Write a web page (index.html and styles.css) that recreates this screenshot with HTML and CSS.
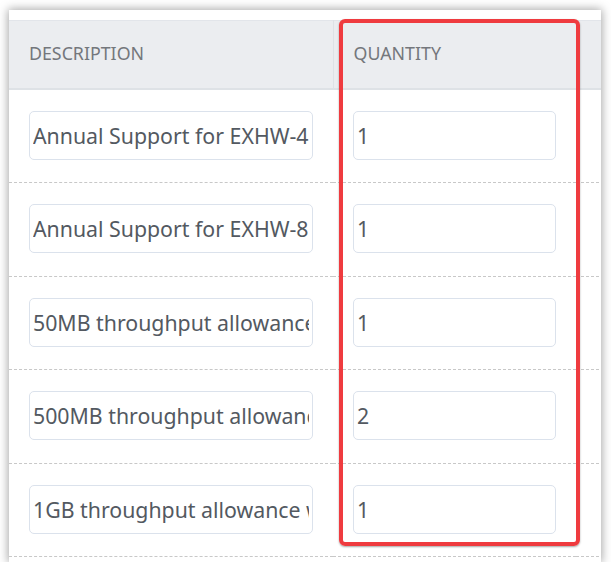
FILE: index.html
```html
<!DOCTYPE html>
<html lang="en">

<head>
  <meta charset="UTF-8" />
  <meta name="viewport" content="width=device-width, initial-scale=1.0" />
  <title>Items</title>
  <link rel="stylesheet" href="styles.css">
</head>

<body>
  <section class="panel">
    <table class="items">
      <colgroup>
        <col class="col-desc" />
        <col class="col-qty" />
        <col class="col-rest" />
      </colgroup>
      <thead>
        <tr>
          <th class="divider">DESCRIPTION</th>
          <th>QUANTITY</th>
          <th></th>
        </tr>
      </thead>
      <tbody>
        <tr>
          <td><input type="text" value="Annual Support for EXHW-4 appliance" /></td>
          <td><input type="text" value="1" /></td>
          <td></td>
        </tr>
        <tr>
          <td><input type="text" value="Annual Support for EXHW-8 appliance" /></td>
          <td><input type="text" value="1" /></td>
          <td></td>
        </tr>
        <tr>
          <td><input type="text" value="50MB throughput allowance with support" /></td>
          <td><input type="text" value="1" /></td>
          <td></td>
        </tr>
        <tr>
          <td><input type="text" value="500MB throughput allowance with support" /></td>
          <td><input type="text" value="2" /></td>
          <td></td>
        </tr>
        <tr>
          <td><input type="text" value="1GB throughput allowance with support" /></td>
          <td><input type="text" value="1" /></td>
          <td></td>
        </tr>
      </tbody>
    </table>
    <div class="highlight"></div>
  </section>
</body>

</html>
```

FILE: styles.css
```css
* {
  box-sizing: border-box;
}

body {
  margin: 0;
  background: #ffffff;
  font-family: "Noto Sans", "Open Sans", sans-serif;
}

.panel {
  position: relative;
  margin: 10px 0 0 9px;
  width: 592px;
  height: 552px;
  padding-top: 10px;
  background: #ffffff;
  overflow: hidden;
  box-shadow: 0 0 9px 1px rgba(0, 0, 0, 0.35);
}

.items {
  width: 700px;
  table-layout: fixed;
  border-collapse: collapse;
}

.col-desc {
  width: 324px;
}

.col-qty {
  width: 243px;
}

.col-rest {
  width: 133px;
}

.items th {
  height: 68px;
  padding: 0 20px 2px;
  text-align: left;
  font-size: 17.8px;
  font-weight: normal;
  color: #74777c;
  background: #ebedf0;
  border-top: 1px solid #e2e5ea;
  border-bottom: 2px solid #dee2e6;
}

.items th.divider {
  border-right: 1px solid #dee2e6;
}

.items td {
  padding: 21px 20px 22.5px;
  border-bottom: 1px dashed #c8c8c8;
}

.items input {
  display: block;
  width: 100%;
  height: 49px;
  padding: 0 3px;
  font-family: "Noto Sans", "Open Sans", sans-serif;
  font-size: 21.3px;
  color: #535961;
  background: #ffffff;
  border: 1px solid #dbe2ec;
  border-radius: 5px;
  outline: none;
}

.highlight {
  position: absolute;
  top: 9px;
  left: 330px;
  width: 241px;
  height: 527px;
  border: 4.5px solid #ef3b3f;
  border-radius: 6px;
  box-shadow: 0 1px 2px rgba(0, 0, 0, 0.35);
  pointer-events: none;
}
```
